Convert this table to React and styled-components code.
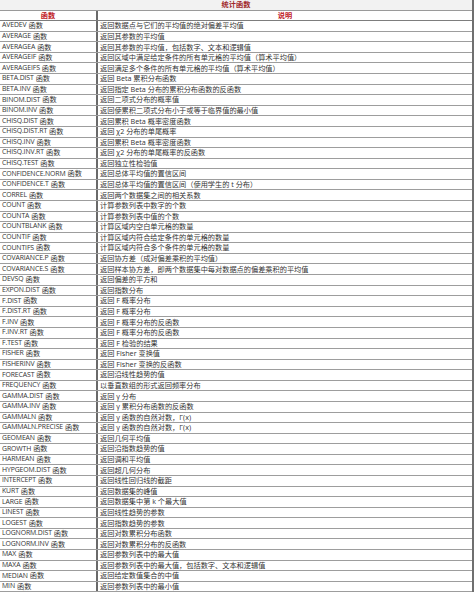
import React from "react";
import styled, { createGlobalStyle } from "styled-components";

const Global = createGlobalStyle`
  html, body { margin: 0; padding: 0; background: #ffffff; }
  body { font-family: "Open Sans", "Noto Sans CJK SC", sans-serif; }
`;

const ROW_H = 10.59;

const Table = styled.div`
  width: 474px;
  box-sizing: border-box;
  border-right: 2px solid #6f6f6f;
  background: #ffffff;
  font-family: "Open Sans", "Noto Sans CJK SC", sans-serif;
  font-size: 7.2px;
  color: #333333;
`;

const TitleRow = styled.div`
  height: ${ROW_H}px;
  box-sizing: border-box;
  display: flex;
  align-items: center;
  justify-content: center;
  background: #f2f2f2;
  border-bottom: 1px solid #9a9a9a;
  color: #a0282a;
  font-weight: 600;
  line-height: 1;
`;

const Row = styled.div`
  height: ${ROW_H}px;
  box-sizing: border-box;
  display: grid;
  grid-template-columns: 98px 1fr;
  border-bottom: 1px solid ${(p) => (p.$head ? "#7d7d7d" : "#9d9d9d")};
  line-height: 1;
`;

const Cell = styled.div`
  display: flex;
  align-items: center;
  justify-content: ${(p) => (p.$head ? "center" : "flex-start")};
  padding-left: ${(p) => (p.$head ? "0" : "2px")};
  white-space: nowrap;
  overflow: hidden;
  color: ${(p) => (p.$head ? "#c0201f" : "#333333")};
  font-weight: ${(p) => (p.$head ? 700 : 400)};
  border-right: ${(p) => (p.$first ? "2px solid #6a6a6a" : "none")};
`;

const FnName = styled.span`
  font-size: 6.9px;
  letter-spacing: -0.12px;
  margin-right: 2px;
`;

const rows = [
  ["AVEDEV", "返回数据点与它们的平均值的绝对偏差平均值"],
  ["AVERAGE", "返回其参数的平均值"],
  ["AVERAGEA", "返回其参数的平均值，包括数字、文本和逻辑值"],
  ["AVERAGEIF", "返回区域中满足给定条件的所有单元格的平均值（算术平均值）"],
  ["AVERAGEIFS", "返回满足多个条件的所有单元格的平均值（算术平均值）"],
  ["BETA.DIST", "返回 Beta 累积分布函数"],
  ["BETA.INV", "返回指定 Beta 分布的累积分布函数的反函数"],
  ["BINOM.DIST", "返回二项式分布的概率值"],
  ["BINOM.INV", "返回使累积二项式分布小于或等于临界值的最小值"],
  ["CHISQ.DIST", "返回累积 Beta 概率密度函数"],
  ["CHISQ.DIST.RT", "返回 χ2 分布的单尾概率"],
  ["CHISQ.INV", "返回累积 Beta 概率密度函数"],
  ["CHISQ.INV.RT", "返回 χ2 分布的单尾概率的反函数"],
  ["CHISQ.TEST", "返回独立性检验值"],
  ["CONFIDENCE.NORM", "返回总体平均值的置信区间"],
  ["CONFIDENCE.T", "返回总体平均值的置信区间（使用学生的 t 分布）"],
  ["CORREL", "返回两个数据集之间的相关系数"],
  ["COUNT", "计算参数列表中数字的个数"],
  ["COUNTA", "计算参数列表中值的个数"],
  ["COUNTBLANK", "计算区域内空白单元格的数量"],
  ["COUNTIF", "计算区域内符合给定条件的单元格的数量"],
  ["COUNTIFS", "计算区域内符合多个条件的单元格的数量"],
  ["COVARIANCE.P", "返回协方差（成对偏差乘积的平均值）"],
  ["COVARIANCE.S", "返回样本协方差，即两个数据集中每对数据点的偏差乘积的平均值"],
  ["DEVSQ", "返回偏差的平方和"],
  ["EXPON.DIST", "返回指数分布"],
  ["F.DIST", "返回 F 概率分布"],
  ["F.DIST.RT", "返回 F 概率分布"],
  ["F.INV", "返回 F 概率分布的反函数"],
  ["F.INV.RT", "返回 F 概率分布的反函数"],
  ["F.TEST", "返回 F 检验的结果"],
  ["FISHER", "返回 Fisher 变换值"],
  ["FISHERINV", "返回 Fisher 变换的反函数"],
  ["FORECAST", "返回沿线性趋势的值"],
  ["FREQUENCY", "以垂直数组的形式返回频率分布"],
  ["GAMMA.DIST", "返回 γ 分布"],
  ["GAMMA.INV", "返回 γ 累积分布函数的反函数"],
  ["GAMMALN", "返回 γ 函数的自然对数，Γ(x)"],
  ["GAMMALN.PRECISE", "返回 γ 函数的自然对数，Γ(x)"],
  ["GEOMEAN", "返回几何平均值"],
  ["GROWTH", "返回沿指数趋势的值"],
  ["HARMEAN", "返回调和平均值"],
  ["HYPGEOM.DIST", "返回超几何分布"],
  ["INTERCEPT", "返回线性回归线的截距"],
  ["KURT", "返回数据集的峰值"],
  ["LARGE", "返回数据集中第 k 个最大值"],
  ["LINEST", "返回线性趋势的参数"],
  ["LOGEST", "返回指数趋势的参数"],
  ["LOGNORM.DIST", "返回对数累积分布函数"],
  ["LOGNORM.INV", "返回对数累积分布的反函数"],
  ["MAX", "返回参数列表中的最大值"],
  ["MAXA", "返回参数列表中的最大值，包括数字、文本和逻辑值"],
  ["MEDIAN", "返回给定数值集合的中值"],
  ["MIN", "返回参数列表中的最小值"],
];

export default function App() {
  return (
    <>
      <Global />
      <Table>
        <TitleRow>统计函数</TitleRow>
        <Row $head>
          <Cell $head $first>函数</Cell>
          <Cell $head>说明</Cell>
        </Row>
        {rows.map(([name, desc]) => (
          <Row key={name}>
            <Cell $first>
              <FnName>{name}</FnName>函数
            </Cell>
            <Cell>{desc}</Cell>
          </Row>
        ))}
      </Table>
    </>
  );
}
